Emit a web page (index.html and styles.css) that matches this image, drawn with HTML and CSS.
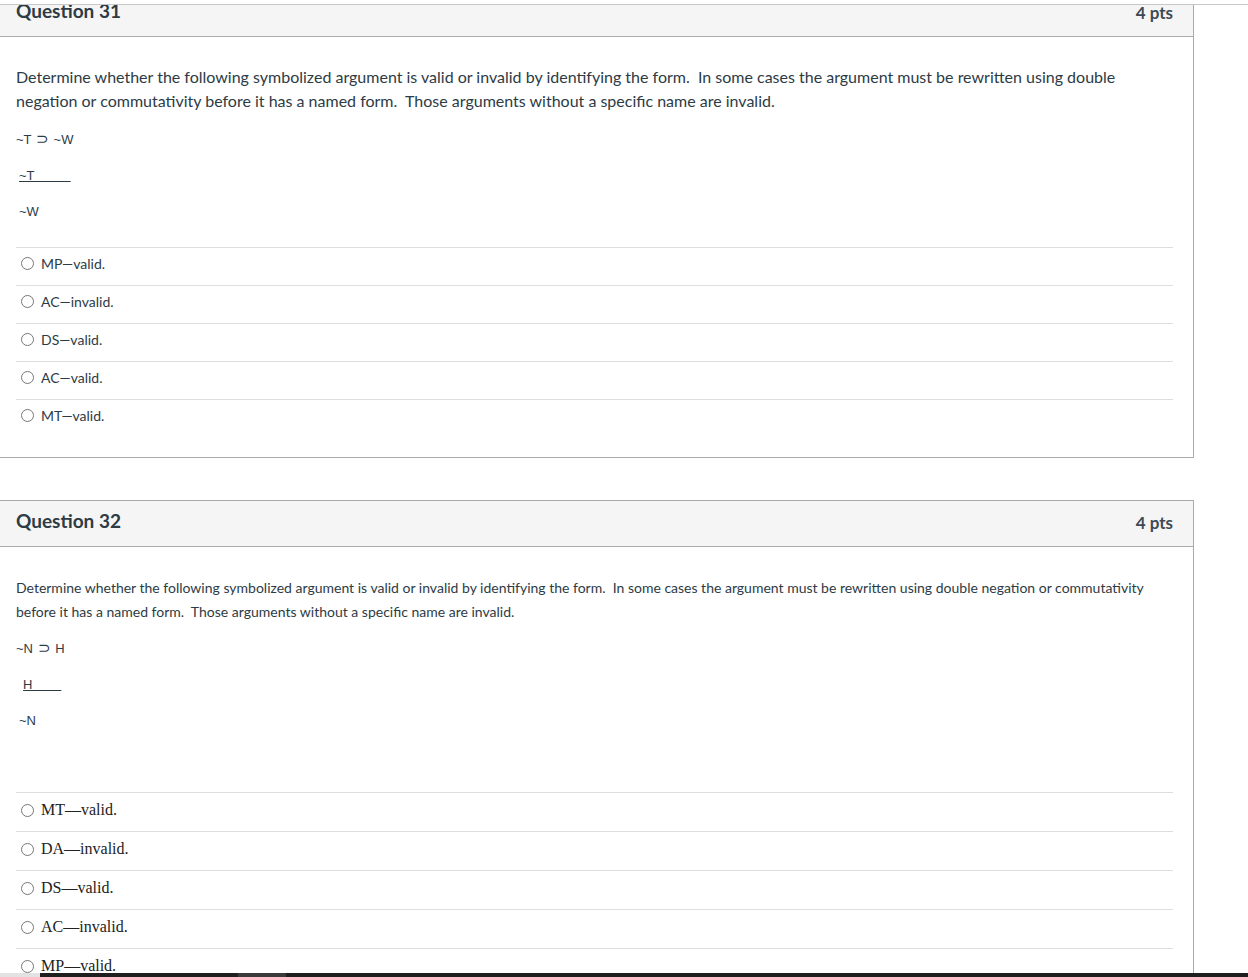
FILE: index.html
```html
<!DOCTYPE html>
<html lang="en">
<head>
    <meta charset="UTF-8" />
    <title>Quiz</title>
    <link rel="stylesheet" href="styles.css">
</head>
<body>
    <div class="top-edge"></div>

    <div class="question q-first">
        <div class="header">
            <h3>Question 31</h3>
            <span class="pts">4 pts</span>
        </div>
        <div class="content">
            <p class="text">Determine whether the following symbolized argument is valid or invalid by identifying the form.&nbsp; In some cases the argument must be rewritten using double negation or commutativity before it has a named form.&nbsp; Those arguments without a specific name are invalid.</p>
            <div class="arg">
                <p>~T <span class="horseshoe">&sup;</span> ~W</p>
                <p><u class="premise">~T&nbsp;&nbsp;&nbsp;&nbsp;&nbsp;&nbsp;&nbsp;&nbsp;&nbsp;&nbsp;</u></p>
                <p class="concl">~W</p>
            </div>
            <ul class="answers">
                <li><span class="radio"></span>MP&mdash;valid.</li>
                <li><span class="radio"></span>AC&mdash;invalid.</li>
                <li><span class="radio"></span>DS&mdash;valid.</li>
                <li><span class="radio"></span>AC&mdash;valid.</li>
                <li><span class="radio"></span>MT&mdash;valid.</li>
            </ul>
        </div>
    </div>

    <div class="question">
        <div class="header">
            <h3>Question 32</h3>
            <span class="pts">4 pts</span>
        </div>
        <div class="content">
            <p class="text small">Determine whether the following symbolized argument is valid or invalid by identifying the form.&nbsp; In some cases the argument must be rewritten using double negation or commutativity before it has a named form.&nbsp; Those arguments without a specific name are invalid.</p>
            <div class="arg arg-tight">
                <p>~N <span class="horseshoe">&sup;</span> H</p>
                <p><u class="premise wide">H&nbsp;&nbsp;&nbsp;&nbsp;&nbsp;&nbsp;&nbsp;&nbsp;</u></p>
                <p class="concl">~N</p>
            </div>
            <ul class="answers serif">
                <li><span class="radio"></span>MT&mdash;valid.</li>
                <li><span class="radio"></span>DA&mdash;invalid.</li>
                <li><span class="radio"></span>DS&mdash;valid.</li>
                <li><span class="radio"></span>AC&mdash;invalid.</li>
                <li><span class="radio"></span>MP&mdash;valid.</li>
            </ul>
        </div>
    </div>

    <div class="bottom-edge">
        <span class="seg-light"></span>
        <span class="seg-dark"></span>
        <span class="seg-thumb"></span>
        <span class="seg-dark grow"></span>
    </div>
</body>
</html>
```

FILE: styles.css
```css
html,
body {
    margin: 0;
    background: #fff;
    color: #2d3b45;
    font-family: Lato, "Liberation Sans", sans-serif;
}
.top-edge {
    position: fixed;
    top: 0;
    left: 0;
    right: 0;
    height: 4px;
    background: #fff;
    border-bottom: 1px solid #c8c8c8;
    z-index: 2;
}
.question {
    box-sizing: border-box;
    width: 1195px;
    margin: 0 0 42px -1px;
    border: 1px solid #aaa;
}
.q-first {
    margin-top: -10px;
}
.header {
    display: flex;
    align-items: center;
    justify-content: space-between;
    height: 45px;
    padding: 0 20px 0 16px;
    background: #f5f5f5;
    border-bottom: 1px solid #aaa;
}
.header h3 {
    margin: 0 0 6px;
    font-size: 19px;
    font-weight: 700;
}
.pts {
    margin-bottom: 2px;
    font-size: 17px;
    font-weight: 700;
    color: #3d4a54;
}
.content {
    padding: 28px 20px 20px 16px;
}
.text {
    margin: 0 0 8px;
    font-size: 16px;
    line-height: 24px;
}
.text.small {
    font-size: 14px;
    margin-bottom: 6px;
}
.question + .question .content {
    padding-top: 29px;
}
.arg p {
    margin: 0;
    line-height: 36px;
    font-family: "Liberation Sans", Arial, sans-serif;
    font-size: 13px;
}
.horseshoe {
    font-size: 15px;
    margin: 0 1px;
}
.premise {
    margin-left: 3px;
}
.premise.wide {
    margin-left: 7px;
}
.concl {
    padding-left: 3px;
}
.answers {
    list-style: none;
    margin: 17px 0 0;
    padding: 0;
}
.arg-tight + .answers {
    margin-top: 53px;
}
.answers li {
    display: flex;
    align-items: center;
    box-sizing: border-box;
    height: 38px;
    padding-bottom: 6px;
    border-top: 1px solid #ddd;
    font-size: 14px;
}
.answers.serif li {
    height: 39px;
    padding-bottom: 4px;
    font-family: "Liberation Serif", "Times New Roman", serif;
    font-size: 16px;
    color: #222;
}
.radio {
    box-sizing: border-box;
    width: 13px;
    height: 13px;
    margin: 0 7px 0 5px;
    border: 1px solid #777;
    border-radius: 50%;
    flex-shrink: 0;
}
.bottom-edge {
    position: fixed;
    left: 0;
    right: 0;
    bottom: 0;
    height: 4px;
    display: flex;
    z-index: 2;
}
.bottom-edge span {
    height: 100%;
}
.seg-light {
    width: 40px;
    background: #e2e2e2;
}
.seg-dark {
    width: 198px;
    background: #1f1f1f;
}
.seg-thumb {
    width: 48px;
    background: #3a3a3a;
}
.seg-dark.grow {
    flex: 1;
}
```
